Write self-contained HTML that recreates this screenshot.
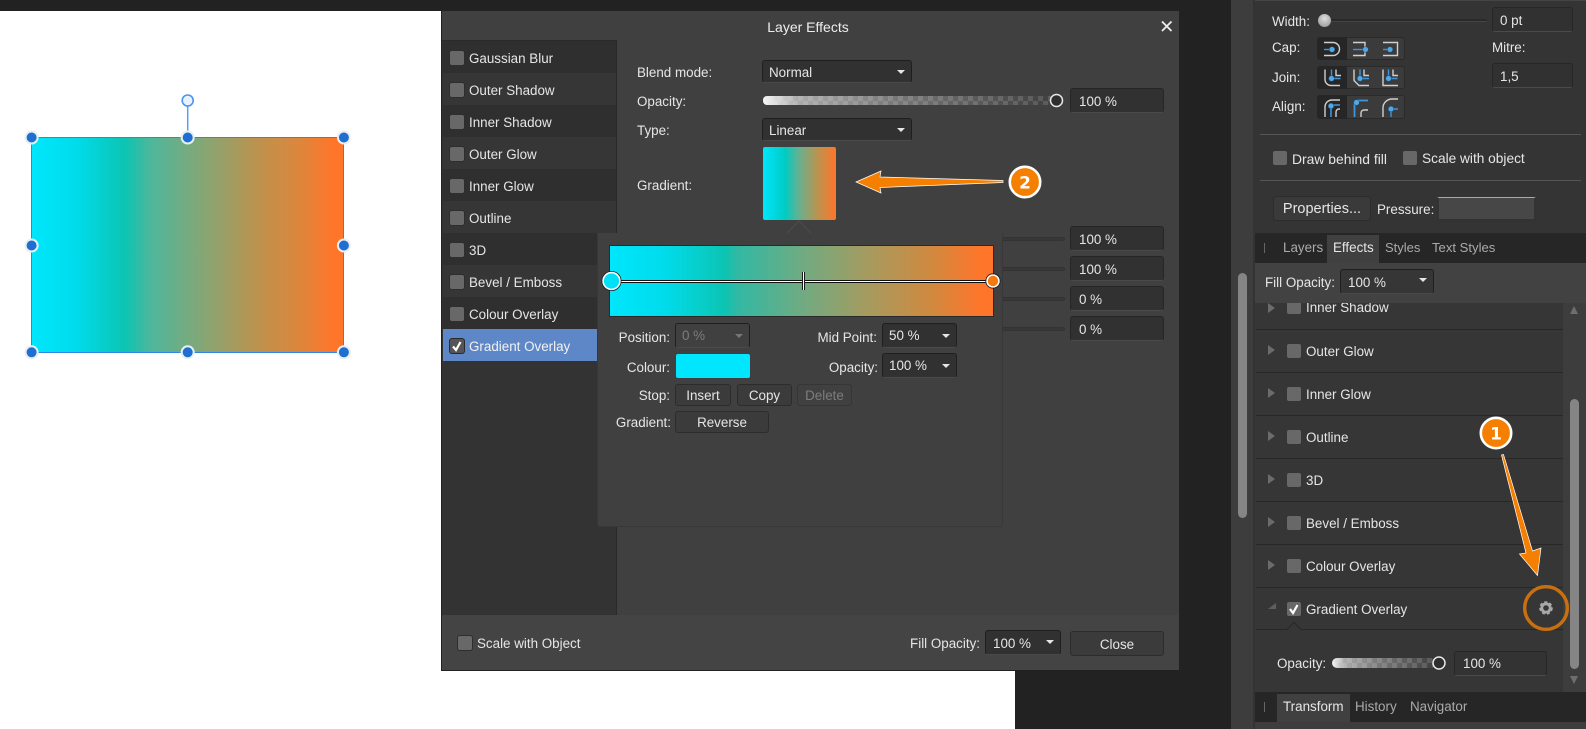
<!DOCTYPE html>
<html><head><meta charset="utf-8"><title>Layer Effects</title>
<style>
html,body{margin:0;padding:0;width:1586px;height:729px;overflow:hidden;background:#222}
body{position:relative;font-family:"Liberation Sans",sans-serif;font-size:13.4px;color:#e6e6e6}
div,span{position:absolute;box-sizing:border-box}
.t{line-height:20px;white-space:nowrap;margin-top:1px}
.r{text-align:right}
.cb{width:14px;height:14px;border-radius:2px;background:#686868;box-shadow:0 0 0 1px #2e2e2e}
.row{left:443px;width:173px;height:32px;background:#333}
.row.a{background:#2f2f2f}
.in{background:#313131;border:1px solid #262626;border-bottom-color:#4a4a4a;border-radius:3px;padding-left:8px;line-height:26px}
.dd{background:#313131;border:1px solid #1f1f1f;border-bottom-color:#4a4a4a;border-radius:3px;padding-left:6px;line-height:23px}
.dd i{position:absolute;right:6px;top:9px;width:0;height:0;border-left:4px solid transparent;border-right:4px solid transparent;border-top:4px solid #e6e6e6}
.btn{background:#3b3b3b;border:1px solid #2c2c2c;border-radius:3px;text-align:center;line-height:22px}
.sep{left:1256px;width:307px;height:1px;background:#272727}
.tri{left:1268px;width:0;height:0;border-top:5px solid transparent;border-bottom:5px solid transparent;border-left:7px solid #6b6b6b}
.track{height:4px;background:#383838;border:1px solid #333;border-radius:2px}
.chk{background:linear-gradient(90deg,rgba(255,255,255,.95) 0,rgba(255,255,255,.55) 12%,rgba(255,255,255,.28) 45%,rgba(255,255,255,0) 95%),repeating-conic-gradient(#5c5c5c 0 25%,#444 0 50%) 0 0/10px 10px}
.tab{line-height:20px;color:#aaa;white-space:nowrap}
</style></head><body>
<div style="left:0;top:0;width:1586px;height:11px;background:#222"></div>
<div style="left:0;top:11px;width:1015px;height:718px;background:#fff"></div>

<!-- gradient object on canvas -->
<div style="left:31px;top:137px;width:313px;height:216px;border:1px solid #2f86e8;background:linear-gradient(90deg,#00e6fc 0,#00dcec 14%,#0cc4b2 30%,#4db79c 38%,#8fa36e 58%,#bb934f 72%,#dd863c 86%,#ff752a 97%)"></div>

<!-- dialog -->
<div style="left:441px;top:11px;width:738px;height:660px;background:#404040;border-left:1px solid #222;border-bottom:1px solid #222"></div>
<div class="t" style="left:441px;top:16px;width:734px;text-align:center;font-size:14px;color:#eee">Layer Effects</div>
<div style="left:442px;top:40px;width:175px;height:575px;background:#333;border-top:1px solid #2a2a2a;border-right:1px solid #2a2a2a"></div>

<div class="row a" style="top:41px"></div><div class="row" style="top:73px;background:#363636"></div>
<div class="row a" style="top:105px"></div><div class="row" style="top:137px;background:#363636"></div>
<div class="row a" style="top:169px"></div><div class="row" style="top:201px;background:#363636"></div>
<div class="row a" style="top:233px"></div><div class="row" style="top:265px;background:#363636"></div>
<div class="row a" style="top:297px"></div>
<div style="left:443px;top:329px;width:154px;height:32px;background:#5d87c7"></div>

<div class="cb" style="left:450px;top:51px"></div><div class="t" style="left:469px;top:48px">Gaussian Blur</div>
<div class="cb" style="left:450px;top:83px"></div><div class="t" style="left:469px;top:80px">Outer Shadow</div>
<div class="cb" style="left:450px;top:115px"></div><div class="t" style="left:469px;top:112px">Inner Shadow</div>
<div class="cb" style="left:450px;top:147px"></div><div class="t" style="left:469px;top:144px">Outer Glow</div>
<div class="cb" style="left:450px;top:179px"></div><div class="t" style="left:469px;top:176px">Inner Glow</div>
<div class="cb" style="left:450px;top:211px"></div><div class="t" style="left:469px;top:208px">Outline</div>
<div class="cb" style="left:450px;top:243px"></div><div class="t" style="left:469px;top:240px">3D</div>
<div class="cb" style="left:450px;top:275px"></div><div class="t" style="left:469px;top:272px">Bevel / Emboss</div>
<div class="cb" style="left:450px;top:307px"></div><div class="t" style="left:469px;top:304px">Colour Overlay</div>
<div class="cb" style="left:450px;top:339px;background:#555;box-shadow:0 0 0 1px #2a2a2a"></div><div class="t" style="left:469px;top:336px;color:#f2f2f2">Gradient Overlay</div>

<div class="t" style="left:637px;top:62px">Blend mode:</div>
<div class="dd" style="left:762px;top:60px;width:150px;height:23px">Normal<i></i></div>
<div class="t" style="left:637px;top:91px">Opacity:</div>
<div class="chk" style="left:763px;top:96px;width:292px;height:9px;border-radius:4px"></div>
<div class="in" style="left:1070px;top:88px;width:94px;height:25px">100 %</div>
<div class="t" style="left:637px;top:120px">Type:</div>
<div class="dd" style="left:762px;top:118px;width:150px;height:23px">Linear<i></i></div>
<div class="t" style="left:637px;top:175px">Gradient:</div>
<div style="left:763px;top:147px;width:73px;height:73px;border-radius:2px;background:linear-gradient(90deg,#00e6fc 0,#00ccc4 30%,#6aaf8d 50%,#bb934f 75%,#ff752a 100%)"></div>

<div class="track" style="left:1000px;top:237px;width:65px"></div>
<div class="track" style="left:1000px;top:267px;width:65px"></div>
<div class="track" style="left:1000px;top:297px;width:65px"></div>
<div class="track" style="left:1000px;top:327px;width:65px"></div>
<div class="in" style="left:1070px;top:226px;width:94px;height:25px">100 %</div>
<div class="in" style="left:1070px;top:256px;width:94px;height:25px">100 %</div>
<div class="in" style="left:1070px;top:286px;width:94px;height:25px">0 %</div>
<div class="in" style="left:1070px;top:316px;width:94px;height:25px">0 %</div>

<!-- gradient popup -->
<div style="left:597px;top:233px;width:406px;height:294px;background:#404040;border:1px solid #383838;border-top:none;border-radius:0 0 3px 3px"></div>
<div style="left:609px;top:245px;width:385px;height:72px;border:1px solid #2a2a2a;background:linear-gradient(90deg,#00e6fc 0,#00dcec 14%,#0cc4b2 30%,#30b9a4 33%,#6fab82 50%,#a89a5e 68%,#d0893f 84%,#ff752a 97%)"></div>

<div class="t r" style="left:590px;top:327px;width:80px">Position:</div>
<div class="dd" style="left:675px;top:323px;width:75px;height:25px;background:#404040;color:#7d7d7d;line-height:24px">0 %<i style="border-top-color:#777;top:10px"></i></div>
<div class="t r" style="left:780px;top:327px;width:97px">Mid Point:</div>
<div class="dd" style="left:882px;top:323px;width:75px;height:25px;line-height:24px">50 %<i style="top:10px"></i></div>
<div class="t r" style="left:590px;top:357px;width:80px">Colour:</div>
<div style="left:676px;top:354px;width:74px;height:24px;background:#00e6ff;border-radius:2px"></div>
<div class="t r" style="left:780px;top:357px;width:98px">Opacity:</div>
<div class="dd" style="left:882px;top:353px;width:75px;height:25px;line-height:24px">100 %<i style="top:10px"></i></div>
<div class="t r" style="left:590px;top:385px;width:80px">Stop:</div>
<div class="btn" style="left:675px;top:384px;width:56px;height:22px">Insert</div>
<div class="btn" style="left:737px;top:384px;width:55px;height:22px">Copy</div>
<div class="btn" style="left:797px;top:384px;width:55px;height:22px;color:#7d7d7d;background:#404040;border-color:#363636">Delete</div>
<div class="t r" style="left:590px;top:412px;width:81px">Gradient:</div>
<div class="btn" style="left:675px;top:411px;width:94px;height:22px">Reverse</div>

<!-- dialog footer -->
<div style="left:442px;top:615px;width:737px;height:55px;background:#444"></div>
<div class="cb" style="left:458px;top:636px"></div><div class="t" style="left:477px;top:633px">Scale with Object</div>
<div class="t r" style="left:880px;top:633px;width:100px">Fill Opacity:</div>
<div class="dd" style="left:985px;top:630px;width:76px;height:25px;line-height:25px;padding-left:7px">100 %<i style="top:9px"></i></div>
<div class="btn" style="left:1070px;top:631px;width:94px;height:25px;line-height:25px">Close</div>

<!-- right side -->
<div style="left:1231px;top:0;width:24px;height:729px;background:#3d3d3d;border-right:2px solid #333"></div>
<div style="left:1238px;top:273px;width:9px;height:245px;border-radius:5px;background:#858585"></div>
<div style="left:1255px;top:0;width:331px;height:233px;background:#343434"></div>
<div style="left:1255px;top:0;width:331px;height:1px;background:#444"></div>

<div class="t" style="left:1272px;top:11px">Width:</div>
<div style="left:1330px;top:19px;width:157px;height:3px;background:#2a2a2a;border-bottom:1px solid #444;border-radius:2px"></div>
<div style="left:1318px;top:14px;width:13px;height:13px;border-radius:50%;background:radial-gradient(circle at 50% 35%,#ddd,#8f8f8f)"></div>
<div class="in" style="left:1492px;top:7px;width:81px;height:25px;line-height:26px;padding-left:7px">0 pt</div>
<div class="t" style="left:1272px;top:37px">Cap:</div>
<div class="t" style="left:1272px;top:67px">Join:</div>
<div class="t" style="left:1272px;top:96px">Align:</div>
<div class="t" style="left:1492px;top:37px">Mitre:</div>
<div class="in" style="left:1492px;top:63px;width:81px;height:25px;line-height:25px;padding-left:7px">1,5</div>

<div style="left:1317px;top:37px;width:88px;height:23px;background:#3b3b3b;border:1px solid #2a2a2a;border-radius:3px"></div>
<div style="left:1317px;top:37px;width:30px;height:23px;background:#262626;border-radius:3px 0 0 3px"></div>
<div style="left:1317px;top:66px;width:88px;height:23px;background:#3b3b3b;border:1px solid #2a2a2a;border-radius:3px"></div>
<div style="left:1317px;top:66px;width:30px;height:23px;background:#262626;border-radius:3px 0 0 3px"></div>
<div style="left:1317px;top:95px;width:88px;height:24px;background:#3b3b3b;border:1px solid #2a2a2a;border-radius:3px"></div>
<div style="left:1317px;top:95px;width:30px;height:24px;background:#262626;border-radius:3px 0 0 3px"></div>

<div style="left:1260px;top:134px;width:321px;height:1px;background:#555"></div>
<div class="cb" style="left:1273px;top:151px;box-shadow:none"></div><div class="t" style="left:1292px;top:148px;font-size:13.9px">Draw behind fill</div>
<div class="cb" style="left:1403px;top:151px;box-shadow:none"></div><div class="t" style="left:1422px;top:148px;font-size:13.7px">Scale with object</div>
<div style="left:1260px;top:180px;width:321px;height:1px;background:#555"></div>
<div class="btn" style="left:1273px;top:196px;width:98px;height:25px;line-height:24px;font-size:14.5px;background:#3a3a3a">Properties...</div>
<div class="t" style="left:1377px;top:199px">Pressure:</div>
<div style="left:1437px;top:197px;width:99px;height:25px;background:#474747;border-top:1px solid #aaa;border-left:2px solid #333;border-right:2px solid #333;border-bottom:3px solid #333"></div>

<div style="left:1255px;top:233px;width:331px;height:30px;background:#262626"></div>
<div style="left:1264px;top:243px;width:1px;height:10px;background:#666"></div>
<div style="left:1327px;top:235px;width:52px;height:28px;background:#404040"></div>
<div class="tab" style="left:1283px;top:238px">Layers</div>
<div class="tab" style="left:1333px;top:238px;color:#e6e6e6">Effects</div>
<div class="tab" style="left:1385px;top:238px;font-size:13px">Styles</div>
<div class="tab" style="left:1432px;top:238px;font-size:13.1px">Text Styles</div>

<div style="left:1255px;top:263px;width:331px;height:40px;background:#424242"></div>
<div class="t" style="left:1265px;top:272px">Fill Opacity:</div>
<div class="dd" style="left:1340px;top:269px;width:94px;height:25px;line-height:25px;padding-left:7px;background:#363636">100 %<i style="top:8px"></i></div>

<div style="left:1255px;top:303px;width:308px;height:389px;background:#363636;overflow:hidden"></div>
<div style="left:1563px;top:303px;width:23px;height:389px;background:#3d3d3d"></div>
<div style="left:1570px;top:399px;width:9px;height:270px;border-radius:5px;background:#858585"></div>
<div style="left:1570px;top:306px;width:0;height:0;border-left:4.5px solid transparent;border-right:4.5px solid transparent;border-bottom:8px solid #6e6e6e"></div>
<div style="left:1570px;top:676px;width:0;height:0;border-left:4.5px solid transparent;border-right:4.5px solid transparent;border-top:8px solid #6e6e6e"></div>

<div class="sep" style="top:329px"></div><div class="sep" style="top:372px"></div><div class="sep" style="top:415px"></div><div class="sep" style="top:458px"></div><div class="sep" style="top:501px"></div><div class="sep" style="top:544px"></div><div class="sep" style="top:587px"></div><div class="sep" style="top:629px"></div>

<div style="left:1255px;top:298px;width:308px;height:5px;background:#424242"></div>
<div class="tri" style="top:303px"></div><div class="cb" style="left:1287px;top:303px;box-shadow:none;height:11px;border-radius:0 0 2px 2px"></div>
<div class="t" style="left:1306px;top:303px;height:16px;overflow:hidden;line-height:10px;margin-top:0">Inner Shadow</div>

<div class="tri" style="top:345px"></div><div class="cb" style="left:1287px;top:344px;box-shadow:none"></div><div class="t" style="left:1306px;top:341px">Outer Glow</div>
<div class="tri" style="top:388px"></div><div class="cb" style="left:1287px;top:387px;box-shadow:none"></div><div class="t" style="left:1306px;top:384px">Inner Glow</div>
<div class="tri" style="top:431px"></div><div class="cb" style="left:1287px;top:430px;box-shadow:none"></div><div class="t" style="left:1306px;top:427px">Outline</div>
<div class="tri" style="top:474px"></div><div class="cb" style="left:1287px;top:473px;box-shadow:none"></div><div class="t" style="left:1306px;top:470px">3D</div>
<div class="tri" style="top:517px"></div><div class="cb" style="left:1287px;top:516px;box-shadow:none"></div><div class="t" style="left:1306px;top:513px">Bevel / Emboss</div>
<div class="tri" style="top:560px"></div><div class="cb" style="left:1287px;top:559px;box-shadow:none"></div><div class="t" style="left:1306px;top:556px">Colour Overlay</div>
<div class="cb" style="left:1287px;top:602px;box-shadow:none"></div><div class="t" style="left:1306px;top:599px">Gradient Overlay</div>

<div class="t" style="left:1277px;top:653px">Opacity:</div>
<div class="chk" style="left:1332px;top:658px;width:104px;height:10px;border-radius:5px"></div>
<div class="in" style="left:1454px;top:651px;width:93px;height:25px;line-height:24px;background:#333">100 %</div>

<div style="left:1255px;top:692px;width:331px;height:30px;background:#262626"></div>
<div style="left:1255px;top:722px;width:331px;height:7px;background:#3d3d3d"></div>
<div style="left:1264px;top:702px;width:1px;height:10px;background:#666"></div>
<div style="left:1277px;top:694px;width:73px;height:28px;background:#404040"></div>
<div class="tab" style="left:1283px;top:697px;color:#e6e6e6">Transform</div>
<div class="tab" style="left:1355px;top:697px">History</div>
<div class="tab" style="left:1410px;top:697px">Navigator</div>

<!-- vector overlay -->
<svg width="1586" height="729" viewBox="0 0 1586 729" style="position:absolute;left:0;top:0">
<!-- selection handles -->
<line x1="187.7" y1="106" x2="187.7" y2="137" stroke="#5b9df0" stroke-width="1.5"/>
<circle cx="187.7" cy="100.5" r="5.5" fill="#e8f2fe" stroke="#4d94ec" stroke-width="1.6"/>
<g fill="#1f6fd2" stroke="#e9eef3" stroke-width="2">
<circle cx="31.6" cy="137.5" r="6"/><circle cx="187.7" cy="137.5" r="6"/><circle cx="343.9" cy="137.5" r="6"/>
<circle cx="31.6" cy="245.5" r="6"/><circle cx="343.9" cy="245.5" r="6"/>
<circle cx="31.6" cy="352.3" r="6"/><circle cx="187.7" cy="352.3" r="6"/><circle cx="343.9" cy="352.3" r="6"/>
</g>
<!-- dialog close -->
<path d="M1162 21.5 L1171.5 31 M1171.5 21.5 L1162 31" stroke="#eee" stroke-width="1.8" fill="none"/>
<!-- opacity thumb -->
<circle cx="1056.5" cy="100.5" r="6" fill="#2e2e2e" stroke="#e8e8e8" stroke-width="1.5"/>
<circle cx="1439" cy="663" r="6" fill="#2e2e2e" stroke="#e8e8e8" stroke-width="1.5"/>
<!-- swatch caret -->
<path d="M787 233 L799 221 L811 233" fill="#404040" stroke="#4c4c4c" stroke-width="1"/>
<!-- gradient stops -->
<line x1="611" y1="281.5" x2="993" y2="281.5" stroke="#111" stroke-width="3"/>
<line x1="611" y1="281.5" x2="993" y2="281.5" stroke="#fff" stroke-width="1.1"/>
<line x1="803.5" y1="272" x2="803.5" y2="290" stroke="#111" stroke-width="3"/>
<line x1="803.5" y1="272" x2="803.5" y2="290" stroke="#fff" stroke-width="1.1"/>
<circle cx="611.5" cy="281" r="8.5" fill="#00e0f8" stroke="#fff" stroke-width="1.8"/>
<circle cx="611.5" cy="281" r="9.6" fill="none" stroke="#222" stroke-width=".8"/>
<circle cx="993" cy="281" r="6" fill="#f47a10" stroke="#fff" stroke-width="1.6"/>
<circle cx="993" cy="281" r="7.2" fill="none" stroke="#222" stroke-width=".8"/>
<!-- check marks -->
<path d="M453 346.5 L456 350 L460.5 342" fill="none" stroke="#fff" stroke-width="2.2"/>
<path d="M1290 609 L1293 613 L1297.5 605" fill="none" stroke="#fff" stroke-width="2.2"/>
<!-- gradient overlay row triangle and notch -->
<path d="M1268 609 L1276 609 L1276 603 Z" fill="#5e5e5e"/>
<path d="M1287 629.5 L1294 622.5 L1301 629.5" fill="#363636" stroke="#272727" stroke-width="1"/>
<rect x="1288" y="628.5" width="12" height="2" fill="#363636"/>
<!-- stroke icon groups -->
<g fill="none" stroke="#cfcfcf" stroke-width="1.4">
<path d="M1324 42.5 h9 a6.5 6.5 0 0 1 0 13 h-9"/><path d="M1353 42.5 h12 v13 h-12"/><path d="M1383 42.5 h14.5 v13 h-14.5"/>
<path d="M1325 69.5 v10 a6 6 0 0 0 6 6 h9"/><path d="M1336 69.5 v6 h5"/>
<path d="M1354 69.5 v11 l5 5 h10"/><path d="M1364 69.5 v6 h5"/>
<path d="M1383 69.5 v16 h15"/><path d="M1393 69.5 v6 h5"/>
<path d="M1325 117 v-10 a7 7 0 0 1 7 -7 h8"/><path d="M1336 117 v-5 a3 3 0 0 1 3 -3 h1"/>
<path d="M1361 117 v-4 a3 3 0 0 1 3 -3 h4"/>
<path d="M1383 117 v-9 a9 9 0 0 1 9 -9 h6"/>
</g>
<g fill="none" stroke="#3f94dc" stroke-width="1.4">
<path d="M1324 49.5 h8"/><path d="M1353 49.5 h12"/><path d="M1383 49.5 h7"/>
<path d="M1331.5 69.5 v9 h9"/><path d="M1360 69.5 v9 h9"/><path d="M1388.5 69.5 v9 h9"/>
<path d="M1331 117 v-8 a4 4 0 0 1 4 -4 h5" stroke-width="1.6"/>
<path d="M1354.5 117 v-14 a2.5 2.5 0 0 1 2.5 -2.5 h11" stroke-width="1.8"/>
<path d="M1391 117 v-8 h7"/>
</g>
<g fill="#4fa8e8" stroke="#1d4f78" stroke-width=".5">
<circle cx="1332" cy="49.5" r="2.8"/><circle cx="1365.5" cy="49.5" r="2.8"/><circle cx="1390" cy="49.5" r="2.8"/>
<circle cx="1331.5" cy="78.5" r="2.8"/><circle cx="1360" cy="78.5" r="2.8"/><circle cx="1388.5" cy="78.5" r="2.8"/>
<circle cx="1331" cy="106" r="2.8"/><circle cx="1356.5" cy="102.5" r="2.8"/><circle cx="1391" cy="109" r="2.8"/>
</g>
<!-- gear + ring -->
<circle cx="1546" cy="608" r="21.3" fill="none" stroke="#c8700f" stroke-width="3.4"/>
<circle cx="1546" cy="608" r="4.2" fill="none" stroke="#a8a8a8" stroke-width="2.8"/>
<circle cx="1546" cy="608" r="5.9" fill="none" stroke="#a8a8a8" stroke-width="1.8" stroke-dasharray="3 2.18"/>
<!-- arrow 1 -->
<path d="M1501.5 455 L1503.5 454.5 L1532.5 551 L1541 548 L1537.5 575.5 L1519.5 554 L1526 553 Z" fill="#f57f00" stroke="#fff" stroke-width=".7"/>
<circle cx="1496" cy="433" r="15.2" fill="#f57f00" stroke="#fff" stroke-width="2.6"/>
<text x="1496" y="439.5" text-anchor="middle" font-family="'DejaVu Sans',sans-serif" font-weight="bold" font-size="17" fill="#fff">1</text>
<!-- arrow 2 -->
<path d="M856 182 L881 171 L880 177 L1003 180.5 L1003 182.5 L880 187.5 L881 193 Z" fill="#f57f00" stroke="#fff" stroke-width=".7"/>
<circle cx="1025" cy="182" r="15.2" fill="#f57f00" stroke="#fff" stroke-width="2.6"/>
<text x="1025" y="188.5" text-anchor="middle" font-family="'DejaVu Sans',sans-serif" font-weight="bold" font-size="17" fill="#fff">2</text>
</svg>
</body></html>
